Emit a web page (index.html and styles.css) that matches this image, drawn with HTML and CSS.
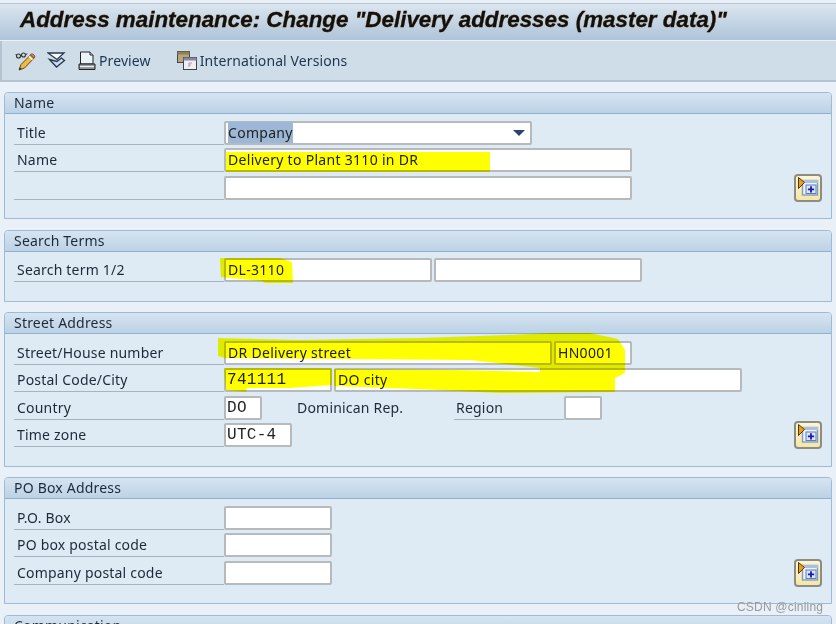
FILE: index.html
```html
<!DOCTYPE html>
<html lang="en">
  <head>
    <meta charset="UTF-8" />
    <title>Address maintenance</title>
    <link rel="stylesheet" href="styles.css">
  </head>
  <body>
    <svg class="defs" width="0" height="0">
      <symbol id="expand" viewBox="0 0 24 24">
        <rect x="6.5" y="4.5" width="15" height="14.5" fill="#eef3fa" stroke="#7d9cc4" stroke-width="1.4"/>
        <rect x="6" y="4" width="16" height="3" fill="#a9c0de"/>
        <rect x="10" y="9" width="10" height="8.5" fill="#dbe7f6" stroke="#5c7fb4"/>
        <path d="M15 10.2v6.2M11.9 13.3h6.2" stroke="#1a1ab0" stroke-width="1.8"/>
        <path d="M2.500 1.500l6 5-6 6z" fill="#f39c12" stroke="#4a3a1a" stroke-width="1"/>
      </symbol>
    </svg>

    <div class="title-bar">
      <h1>Address maintenance: Change "Delivery addresses (master data)"</h1>
    </div>

    <div class="toolbar">
      <svg class="icon-glasses" width="21" height="20" viewBox="0 0 21 20">
        <circle cx="3.5" cy="5" r="2" fill="none" stroke="#333" stroke-width="1.1"/>
        <circle cx="8.5" cy="4" r="2" fill="none" stroke="#333" stroke-width="1.1"/>
        <path d="M5.4 4.6l1.2-.3M1.5 5L1 3M10.4 3.6l2-.8" stroke="#333" stroke-width="1"/>
        <path d="M4 19l2-5.500L15.500 4l3.500 3.200L9.500 17z" fill="#f6b73c" stroke="#5b4a2a" stroke-width="1"/>
        <path d="M14 5.500l3.500 3.200" stroke="#fff" stroke-width="1.200"/>
        <path d="M15.500 4l3.500 3.200 1-1.200c0-1.500-2-3.300-3.500-3.200z" fill="#e77" stroke="#5b4a2a" stroke-width=".8"/>
        <path d="M4 19l.8-2.800 2 1.800z" fill="#333"/>
      </svg>
      <svg class="icon-chevrons" width="19" height="16" viewBox="0 0 19 16">
        <path d="M1 1h16L10 7.500z" fill="#f4f8fc" stroke="#27384e" stroke-width="1.300"/>
        <path d="M2.500 7.500L9.500 15l8-6.500-3-2.500-4.500 3.500z" fill="#c9dcf0" stroke="#27384e" stroke-width="1.300"/>
      </svg>
      <button class="tool-btn" type="button">
        <svg width="18" height="20" viewBox="0 0 18 20">
          <path d="M2.500 1h9.500l3 3v9H2.500z" fill="#eaf2fa" stroke="#222" stroke-width="1"/>
          <path d="M12 1v3h3" fill="#cfdde8" stroke="#222" stroke-width="1"/>
          <path d="M1 13h16v5.500H1z" fill="#8d949b" stroke="#222" stroke-width="1"/>
          <path d="M2 15.500h14" stroke="#eee" stroke-width="1.200"/>
        </svg>
        Preview
      </button>
      <button class="tool-btn tool-btn-wide" type="button">
        <svg width="20" height="19" viewBox="0 0 20 19">
          <rect x=".5" y=".5" width="12" height="11" fill="#b8a77a" stroke="#444"/>
          <rect x=".5" y=".5" width="12" height="3" fill="#8c8054"/>
          <rect x="6.500" y="6.500" width="13" height="12" fill="#f1edf4" stroke="#444"/>
          <rect x="6.500" y="6.500" width="13" height="3" fill="#8a86a0"/>
          <path d="M12 12h3M12 12v4M12 14h2" stroke="#a89ab5" stroke-width="1"/>
        </svg>
        International Versions
      </button>
    </div>

    <div class="content">
      <section class="panel">
        <div class="panel-head">Name</div>
        <div class="panel-body">
          <div class="rows">
            <div class="row">
              <label class="label">Title</label>
              <div class="field w-308 select"><span class="selected">Company</span><i class="caret"></i></div>
            </div>
            <div class="row">
              <label class="label">Name</label>
              <div class="field w-408">Delivery to Plant 3110 in DR</div>
            </div>
            <div class="row">
              <label class="label"></label>
              <div class="field w-408"></div>
            </div>
          </div>
          <button class="expand" type="button"><svg width="24" height="24"><use href="#expand"/></svg></button>
        </div>
      </section>

      <section class="panel">
        <div class="panel-head">Search Terms</div>
        <div class="panel-body">
          <div class="rows">
            <div class="row">
              <label class="label">Search term 1/2</label>
              <div class="field w-208">DL-3110</div>
              <div class="field w-208">&nbsp;</div>
            </div>
          </div>
        </div>
      </section>

      <section class="panel">
        <div class="panel-head">Street Address</div>
        <div class="panel-body">
          <div class="rows">
            <div class="row">
              <label class="label">Street/House number</label>
              <div class="field w-328">DR Delivery street</div>
              <div class="field w-78">HN0001</div>
            </div>
            <div class="row">
              <label class="label">Postal Code/City</label>
              <div class="field w-108 mono">741111</div>
              <div class="field w-408">DO city</div>
            </div>
            <div class="row">
              <label class="label">Country</label>
              <div class="field w-38 mono">DO</div>
              <span class="plain">Dominican Rep.</span>
              <label class="label label-region">Region</label>
              <div class="field w-38 flush"></div>
            </div>
            <div class="row">
              <label class="label">Time zone</label>
              <div class="field w-68 mono">UTC-4</div>
            </div>
          </div>
          <button class="expand" type="button"><svg width="24" height="24"><use href="#expand"/></svg></button>
        </div>
      </section>

      <section class="panel">
        <div class="panel-head">PO Box Address</div>
        <div class="panel-body">
          <div class="rows">
            <div class="row">
              <label class="label">P.O. Box</label>
              <div class="field w-108"></div>
            </div>
            <div class="row">
              <label class="label">PO box postal code</label>
              <div class="field w-108"></div>
            </div>
            <div class="row">
              <label class="label">Company postal code</label>
              <div class="field w-108"></div>
            </div>
          </div>
          <button class="expand" type="button"><svg width="24" height="24"><use href="#expand"/></svg></button>
        </div>
      </section>

      <section class="panel">
        <div class="panel-head">Communication</div>
      </section>
    </div>

    <!-- hand drawn marker over the fields -->
    <svg class="marker" width="836" height="624" viewBox="0 0 836 624">
      <path d="M226 152H490V172H226z"/>
      <path d="M220 258H280L292 262 293 283 265 283 262 281 221 277z"/>
      <path d="M218 338L300 340 420 338 510 335 550 333 590 333 618 339 625 350 625 373 615 378 615 392 500 393 416 389 334 386 334 369 453 370 540 372 540 368 470 360 225 358 218 356z"/>
      <path d="M224 368H332V385L290 388 247 388 246 392 226 390z"/>
    </svg>

    <div class="watermark">CSDN @cinling</div>
  </body>
</html>
```

FILE: styles.css
```css
html,
body {
  margin: 0;
  height: 624px;
  overflow: hidden;
}
body {
  position: relative;
  background-color: #e9f0f7;
  font-family: "Noto Sans", sans-serif;
  font-size: 14px;
  letter-spacing: 0.2px;
  color: #1d2a38;
}
.defs {
  display: block;
  height: 0;
}
.title-bar {
  margin-top: 3px;
  height: 37px;
  display: flex;
  align-items: center;
  padding: 0 0 5px 20px;
  background: linear-gradient(#dbe6f0, #aec4d9);
  border-top: 1px solid #b9c6d2;
  box-sizing: border-box;
}
h1 {
  margin: 0;
  font-family: "Liberation Sans", sans-serif;
  font-size: 22.4px;
  font-style: italic;
  font-weight: bold;
  letter-spacing: 0;
  color: #111;
  white-space: nowrap;
  text-shadow: 0 0 2px #d9b98c;
  -webkit-text-stroke: 0.3px #111;
}
.toolbar {
  height: 41px;
  box-sizing: border-box;
  margin-top: 1px;
  display: flex;
  align-items: center;
  padding-left: 15px;
  background-color: #cfdde8;
  border-bottom: 2px solid #b4c3d1;
  border-left: 2px solid #b4c3d1;
}
.icon-glasses {
  margin-left: -2px;
}
.icon-chevrons {
  margin: -2px 0 0 11px;
}
.tool-btn {
  display: flex;
  align-items: center;
  gap: 3px;
  margin-left: 12px;
  padding: 0;
  border: none;
  background: none;
  font: inherit;
  letter-spacing: 0.1px;
  color: #1b3553;
}
.tool-btn-wide {
  margin-left: 26px;
}
.content {
  display: flex;
  flex-direction: column;
  gap: 10.500px;
  margin: 10px 4px 0;
}
.panel {
  flex: none;
  background-color: #deeaf4;
  border: 1px solid #9ebbd5;
  border-radius: 4px 4px 0 0;
}
.panel-head {
  height: 21px;
  line-height: 19px;
  box-sizing: border-box;
  padding-left: 9px;
  background: linear-gradient(#d6e4f1, #bcd2e6);
  border-bottom: 1px solid #8fb0cf;
  border-radius: 3px 3px 0 0;
}
.panel-body {
  display: flex;
  justify-content: space-between;
  align-items: flex-end;
  padding: 3px 9px 18.500px 9px;
}
.rows {
  display: flex;
  flex-direction: column;
}
.row {
  display: flex;
  align-items: flex-end;
  height: 27.5px;
  box-sizing: border-box;
}
.label {
  width: 210px;
  height: 24px;
  line-height: 24px;
  box-sizing: border-box;
  padding-left: 3px;
  border-bottom: 1px solid #a8b3bd;
}
.label-region {
  width: 110px;
  padding-left: 2px;
}
.plain {
  width: 190px;
  line-height: 24px;
  padding-left: 33px;
  box-sizing: border-box;
}
.field {
  position: relative;
  height: 24px;
  line-height: 20px;
  box-sizing: border-box;
  padding-left: 2px;
  margin-right: 2px;
  background-color: #fff;
  border: 2px solid #b7babc;
  border-radius: 2px;
  white-space: nowrap;
  color: #222;
  letter-spacing: 0.3px;
}
.mono {
  font-family: "Liberation Mono", monospace;
  font-size: 16px;
  padding-left: 1px;
}
.flush {
  margin-right: 0;
}
.selected {
  background-color: #9db8d6;
  padding: 1px 0;
}
.caret {
  position: absolute;
  right: 5px;
  top: 7px;
  border-left: 6px solid transparent;
  border-right: 6px solid transparent;
  border-top: 6px solid #2a4470;
}
.w-38 { width: 38px; }
.w-68 { width: 68px; }
.w-78 { width: 78px; }
.w-108 { width: 108px; }
.w-208 { width: 208px; }
.w-308 { width: 308px; }
.w-328 { width: 328px; }
.w-408 { width: 408px; }
.expand {
  flex: none;
  width: 28px;
  height: 28px;
  padding: 0;
  margin-bottom: -2px;
  display: flex;
  align-items: center;
  justify-content: center;
  background: linear-gradient(#fdf6d3, #f6e6a6);
  border: 2px solid #8c8c84;
  border-radius: 4px;
}
.marker {
  position: absolute;
  left: 0;
  top: 0;
  mix-blend-mode: multiply;
  fill: #ffff00;
}
.watermark {
  position: absolute;
  left: 737px;
  top: 600px;
  font-family: "Liberation Sans", sans-serif;
  font-size: 12px;
  color: #9a9a9a;
}
```
